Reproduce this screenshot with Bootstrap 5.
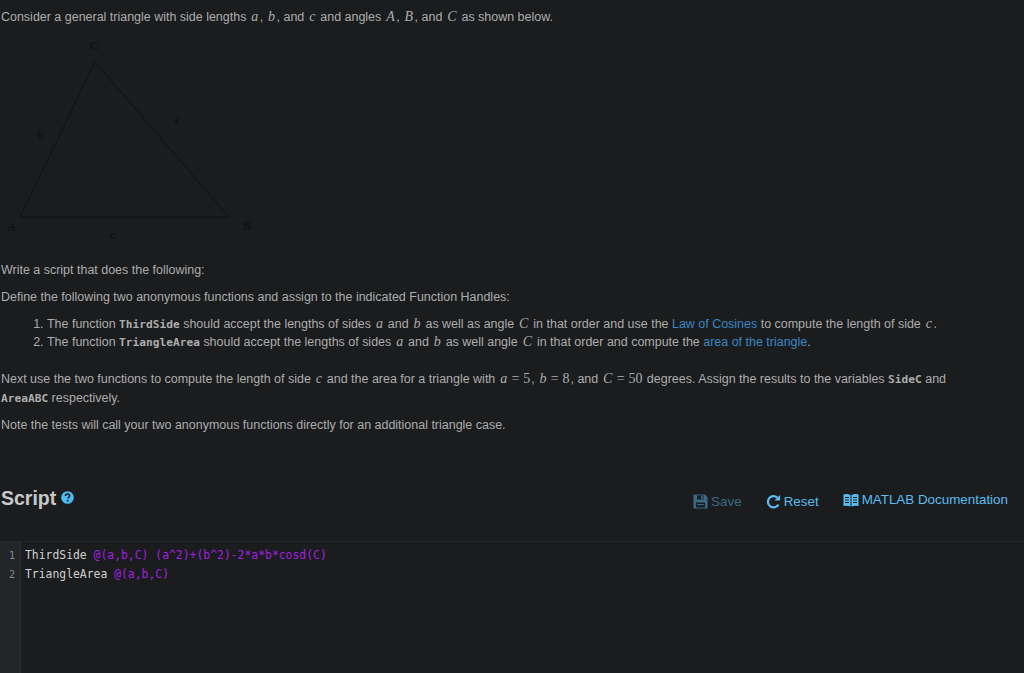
<!DOCTYPE html>
<html lang="en">
<head>
<meta charset="utf-8">
<title>Script</title>
<link href="https://cdn.jsdelivr.net/npm/bootstrap@5.3.0/dist/css/bootstrap.min.css" rel="stylesheet">
<style>
html,body{height:100%;}
body{background:#1a1c1e;color:#adadad;font-family:"Liberation Sans",Arial,sans-serif;font-size:12.48px;line-height:18px;overflow:hidden;}
.page-wrap{height:673px;display:flex;flex-direction:column;overflow:hidden;}
.prob{padding:8px 40px 0 1px;}
.prob p{margin:0 0 9px;}
.prob ol{margin:0 0 19px;padding-left:46px;}
.prob a{color:#3a86c4;text-decoration:none;}
.mth{font-family:"Liberation Serif",serif;font-style:italic;font-size:14px;margin:0 1.45px;line-height:1;}
.eqs{font-family:"Liberation Serif",serif;font-size:14px;line-height:1;margin:0 1px;}
.eqsign{font-family:"Liberation Serif",serif;font-size:14px;line-height:1;margin:0 2.8px;}
.cd{font-family:"DejaVu Sans Mono",monospace;font-weight:700;font-size:11.2px;line-height:1;color:#adadad;}
.twoline{line-height:19px;}
.prob p.twoline{margin-bottom:8px;}
.tri-box{display:block;margin:6px 0 16px;}
.tri-box text{font-family:"Liberation Serif",serif;font-size:12.5px;fill:#0c0d0e;}
.head-row{margin-top:34px;margin-bottom:22px;padding:0 16px 0 1px;height:42px;}
.script-title{font-size:19.5px;font-weight:700;color:#c8c8c8;line-height:24px;margin:0;}
.hlp{margin:-2px 0 0 1px;}
.tool-set{margin-top:4px;}
.tool{display:inline-flex;align-items:center;gap:3px;font-size:13.4px;text-decoration:none;color:#5bbcf0;}
.tool.off{color:#3a6a85;}
.tool.low{margin-top:3px;}
.editor{flex:1;display:flex;border-top:1px solid #25272a;font-family:"DejaVu Sans Mono",monospace;font-size:11.4px;line-height:19px;}
.gutter{width:21px;background:#232527;color:#8a8a8a;text-align:right;padding:4px 5px 0 0;border-right:1px solid #2c2e30;font-size:10px;}
.codes{padding:4px 0 0 4px;color:#cfcfcf;}
.kw{color:#a41fe0;}
</style>
</head>
<body>
<div class="page-wrap">
  <div class="prob">
    <p>Consider a general triangle with side lengths <span class="mth">a</span>, <span class="mth">b</span>, and <span class="mth">c</span> and angles <span class="mth">A</span>, <span class="mth">B</span>, and <span class="mth">C</span> as shown below.</p>
    <svg class="tri-box" width="270" height="210" viewBox="0 0 270 210">
      <polygon points="94,27 19,182 228,182" fill="none" stroke="#0f1011" stroke-width="1"/>
      <text x="89" y="15">C</text><text x="36" y="105">b</text><text x="172" y="89">a</text>
      <text x="6" y="196">A</text><text x="242" y="195">B</text><text x="109" y="204">c</text>
    </svg>
    <p>Write a script that does the following:</p>
    <p>Define the following two anonymous functions and assign to the indicated Function Handles:</p>
    <ol>
      <li>The function <span class="cd">ThirdSide</span> should accept the lengths of sides <span class="mth">a</span> and <span class="mth">b</span> as well as angle <span class="mth">C</span> in that order and use the <a href="#">Law of Cosines</a> to compute the length of side <span class="mth">c</span>.</li>
      <li>The function <span class="cd">TriangleArea</span> should accept the lengths of sides <span class="mth">a</span> and <span class="mth">b</span> as well angle <span class="mth">C</span> in that order and compute the <a href="#">area of the triangle</a>.</li>
    </ol>
    <p class="twoline">Next use the two functions to compute the length of side <span class="mth">c</span> and the area for a triangle with <span class="mth">a</span><span class="eqsign">=</span><span class="eqs">5</span>, <span class="mth">b</span><span class="eqsign">=</span><span class="eqs">8</span>, and <span class="mth">C</span><span class="eqsign">=</span><span class="eqs">50</span> degrees. Assign the results to the variables <span class="cd">SideC</span> and <span class="cd">AreaABC</span> respectively.</p>
    <p>Note the tests will call your two anonymous functions directly for an additional triangle case.</p>
  </div>
  <div class="head-row d-flex align-items-center justify-content-between">
    <div class="d-flex align-items-center gap-1">
      <h2 class="script-title">Script</h2>
      <svg class="hlp" width="13" height="13" viewBox="0 0 14 14"><circle cx="7" cy="7" r="6.8" fill="#4dbcf5"/><path d="M4.8 5.4c0-1.3 1-2.1 2.3-2.1s2.2.8 2.2 1.9c0 1.5-1.8 1.6-1.8 3" fill="none" stroke="#1a1c1e" stroke-width="1.7"/><rect x="6.3" y="9.4" width="1.8" height="1.8" fill="#1a1c1e"/></svg>
    </div>
    <div class="d-flex align-items-center tool-set">
      <a class="tool off low" href="#"><svg width="15" height="15" viewBox="0 0 15 15"><path fill="#3a6a85" fill-rule="evenodd" d="M0.5 0.5h11.5l2.5 2.5v11.5H0.5zM4 1.5v4h6.5v-4zM3 8.5v5h9v-5z"/><rect x="8" y="2" width="1.6" height="3" fill="#3a6a85"/><rect x="4.2" y="10" width="6.6" height="1.1" fill="#3a6a85"/></svg>Save</a>
      <a class="tool low ms-4" href="#"><svg width="15" height="15" viewBox="0 0 16 16"><path d="M13.2 11.3A6 6 0 1 1 12 3.8" fill="none" stroke="#5bbcf0" stroke-width="2.4"/><path d="M15 1v6h-6z" fill="#5bbcf0"/></svg>Reset</a>
      <a class="tool ms-4" href="#"><svg width="16" height="14" viewBox="0 0 16 14"><path fill="#5bbcf0" fill-rule="evenodd" d="M0.5 1.5Q4 .5 7.5 2v11.5Q4 12.3.5 13zM8.5 2Q12 .5 15.5 1.5V13q-3.500-.7-7 .5zM2 4v1h4V4zM2 6.500v1h4v-1zM2 9v1h4V9zM10 4v1h4V4zM10 6.500v1h4v-1zM10 9v1h4V9z"/></svg>MATLAB Documentation</a>
    </div>
  </div>
  <div class="editor">
    <div class="gutter">1<br>2</div>
    <div class="codes">ThirdSide <span class="kw">@(a,b,C) (a^2)+(b^2)-2*a*b*cosd(C)</span><br>TriangleArea <span class="kw">@(a,b,C)</span></div>
  </div>
</div>
</body>
</html>
